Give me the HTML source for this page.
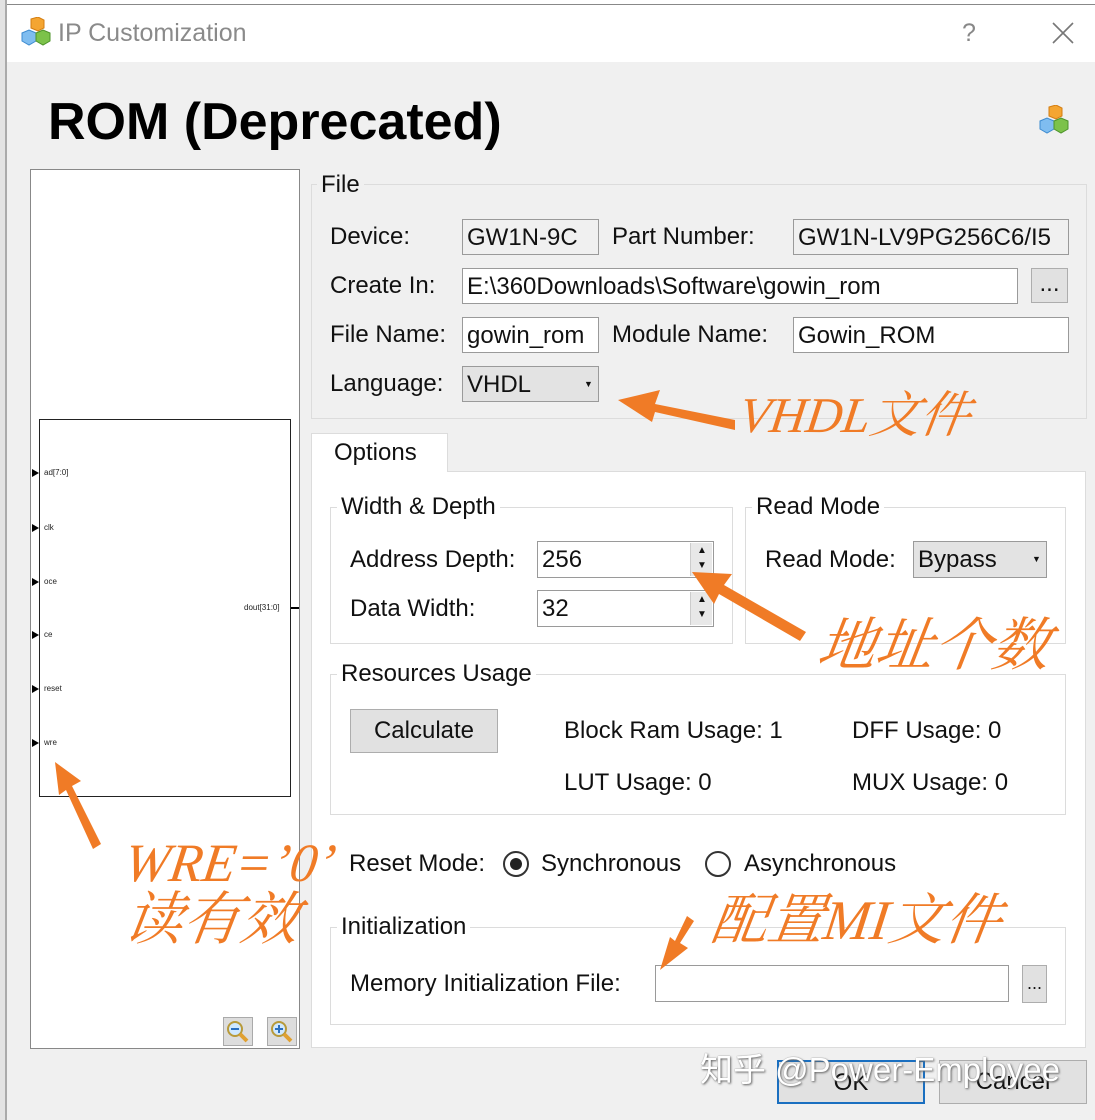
<!DOCTYPE html>
<html><head><meta charset="utf-8"><style>
*{margin:0;padding:0;box-sizing:border-box}
body{width:1095px;height:1120px;position:relative;overflow:hidden;background:#f0f0f0;font-family:"Liberation Sans","Noto Sans CJK SC",sans-serif;color:#111}
.a{position:absolute}
.t{position:absolute;font-size:24px;line-height:28px;white-space:nowrap}
.box{position:absolute;border:1px solid #9a9a9a;background:#fff;font-size:24px;line-height:35px;padding-left:4px;white-space:nowrap;overflow:hidden}
.grp{position:absolute;border:1px solid #dcdcdc}
.gt{position:absolute;font-size:24px;line-height:28px;padding:0 4px;white-space:nowrap}
.btn{position:absolute;border:1px solid #adadad;background:#e1e1e1;font-size:24px;text-align:center;white-space:nowrap}
.pin{position:absolute;left:32px;width:0;height:0;border-top:4px solid transparent;border-bottom:4px solid transparent;border-left:7px solid #000}
.pl{position:absolute;left:44px;font-size:8px;color:#222}
.an{position:absolute;color:#f07b26;font-family:"Liberation Serif","Noto Serif CJK SC",serif;font-style:italic;font-size:54px;line-height:58px;white-space:nowrap;transform:skewX(-8deg)}
.spin{position:absolute;right:1px;width:22px;background:#e8e8e8;border-left:1px solid #ccc}
</style></head><body>
<div class="a" style="left:0;top:0;width:1095px;height:5px;background:#fff;border-bottom:1px solid #888"></div>
<div class="a" style="left:0;top:0;width:7px;height:1120px;background:#e3e3e3;border-right:2px solid #aaa"></div>
<div class="a" style="left:7px;top:5px;width:1088px;height:57px;background:#fff"></div>
<svg class="a" style="left:20px;top:17px" width="32" height="32" viewBox="0 0 32 32">
<path d="M11 2l7-2 6 3v8l-6 3-7-3z" fill="#f4a531" stroke="#d47d10"/>
<path d="M2 16l7-3 7 3v8l-7 4-7-4z" fill="#7fbdf0" stroke="#3d8bd0"/>
<path d="M16 16l7-3 7 3v8l-7 4-7-4z" fill="#7cc24a" stroke="#4c932a"/>
</svg>
<div class="t" style="left:58px;top:19px;font-size:25px;color:#8a8a8a">IP Customization</div>
<div class="t" style="left:962px;top:19px;font-size:25px;color:#888">?</div>
<svg class="a" style="left:1052px;top:22px" width="22" height="22"><path d="M1 1L21 21M21 1L1 21" stroke="#777" stroke-width="1.6"/></svg>
<div class="t" style="left:48px;top:91px;font-size:52px;line-height:62px;font-weight:bold;color:#000">ROM (Deprecated)</div>
<svg class="a" style="left:1038px;top:105px" width="32" height="32" viewBox="0 0 32 32">
<path d="M11 2l7-2 6 3v8l-6 3-7-3z" fill="#f4a531" stroke="#d47d10"/>
<path d="M2 16l7-3 7 3v8l-7 4-7-4z" fill="#7fbdf0" stroke="#3d8bd0"/>
<path d="M16 16l7-3 7 3v8l-7 4-7-4z" fill="#7cc24a" stroke="#4c932a"/>
</svg>
<div class="a" style="left:30px;top:169px;width:270px;height:880px;background:#fff;border:1px solid #888"></div>
<div class="a" style="left:39px;top:419px;width:252px;height:378px;border:1px solid #222"></div>
<div class="pin" style="top:469px"></div><div class="pl" style="top:468px">ad[7:0]</div>
<div class="pin" style="top:524px"></div><div class="pl" style="top:523px">clk</div>
<div class="pin" style="top:578px"></div><div class="pl" style="top:577px">oce</div>
<div class="pin" style="top:631px"></div><div class="pl" style="top:630px">ce</div>
<div class="pin" style="top:685px"></div><div class="pl" style="top:684px">reset</div>
<div class="pin" style="top:739px"></div><div class="pl" style="top:738px">wre</div>
<div class="pl" style="left:244px;top:603px">dout[31:0]</div>
<div class="a" style="left:291px;top:607px;width:8px;height:2px;background:#000"></div>
<div class="a" style="left:223px;top:1017px;width:30px;height:29px;background:#ddd;border:1px solid #aaa"></div>
<div class="a" style="left:267px;top:1017px;width:30px;height:29px;background:#ddd;border:1px solid #aaa"></div>
<svg class="a" style="left:225px;top:1019px" width="26" height="26"><circle cx="10" cy="10" r="7" fill="#cfe8ff" stroke="#b89a3a" stroke-width="2"/><path d="M15 15l7 7" stroke="#e0a030" stroke-width="4"/><path d="M6 10h8" stroke="#2a6fc0" stroke-width="2"/></svg>
<svg class="a" style="left:269px;top:1019px" width="26" height="26"><circle cx="10" cy="10" r="7" fill="#cfe8ff" stroke="#b89a3a" stroke-width="2"/><path d="M15 15l7 7" stroke="#e0a030" stroke-width="4"/><path d="M6 10h8M10 6v8" stroke="#2a6fc0" stroke-width="2"/></svg>
<div class="grp" style="left:311px;top:184px;width:776px;height:235px"></div>
<div class="gt" style="left:317px;top:171px;background:#f0f0f0">File</div>
<div class="t" style="left:330px;top:223px">Device:</div>
<div class="box" style="left:462px;top:219px;width:137px;height:36px;background:#f0f0f0">GW1N-9C</div>
<div class="t" style="left:612px;top:223px">Part Number:</div>
<div class="box" style="left:793px;top:219px;width:276px;height:36px;background:#f0f0f0">GW1N-LV9PG256C6/I5</div>
<div class="t" style="left:330px;top:272px">Create In:</div>
<div class="box" style="left:462px;top:268px;width:556px;height:36px">E:\360Downloads\Software\gowin_rom</div>
<div class="btn" style="left:1031px;top:268px;width:37px;height:35px;line-height:30px">...</div>
<div class="t" style="left:330px;top:321px">File Name:</div>
<div class="box" style="left:462px;top:317px;width:137px;height:36px">gowin_rom</div>
<div class="t" style="left:612px;top:321px">Module Name:</div>
<div class="box" style="left:793px;top:317px;width:276px;height:36px">Gowin_ROM</div>
<div class="t" style="left:330px;top:370px">Language:</div>
<div class="box" style="left:462px;top:366px;width:137px;height:36px;background:#e3e3e3">VHDL<span style="position:absolute;left:121px;top:0px;font-size:9px">▼</span></div>
<div class="a" style="left:311px;top:433px;width:137px;height:40px;background:#fff;border:1px solid #dcdcdc;border-bottom:none"></div>
<div class="t" style="left:334px;top:439px">Options</div>
<div class="a" style="left:311px;top:471px;width:775px;height:577px;background:#fff;border:1px solid #dcdcdc"></div>
<div class="a" style="left:312px;top:471px;width:135px;height:2px;background:#fff"></div>
<div class="grp" style="left:330px;top:507px;width:403px;height:137px"></div>
<div class="gt" style="left:337px;top:493px;background:#fff">Width &amp; Depth</div>
<div class="t" style="left:350px;top:546px">Address Depth:</div>
<div class="box" style="left:537px;top:541px;width:177px;height:37px">256<div class="spin" style="top:1px;height:33px"><span style="position:absolute;left:6px;top:-10px;font-size:10px">▲</span><span style="position:absolute;left:6px;top:5px;font-size:10px">▼</span></div></div>
<div class="t" style="left:350px;top:595px">Data Width:</div>
<div class="box" style="left:537px;top:590px;width:177px;height:37px">32<div class="spin" style="top:1px;height:33px"><span style="position:absolute;left:6px;top:-10px;font-size:10px">▲</span><span style="position:absolute;left:6px;top:5px;font-size:10px">▼</span></div></div>
<div class="grp" style="left:745px;top:507px;width:321px;height:137px"></div>
<div class="gt" style="left:752px;top:493px;background:#fff">Read Mode</div>
<div class="t" style="left:765px;top:546px">Read Mode:</div>
<div class="box" style="left:913px;top:541px;width:134px;height:37px;background:#e3e3e3">Bypass<span style="position:absolute;left:118px;top:0px;font-size:9px">▼</span></div>
<div class="grp" style="left:330px;top:674px;width:736px;height:141px"></div>
<div class="gt" style="left:337px;top:660px;background:#fff">Resources Usage</div>
<div class="btn" style="left:350px;top:709px;width:148px;height:44px;line-height:42px">Calculate</div>
<div class="t" style="left:564px;top:717px">Block Ram Usage: 1</div>
<div class="t" style="left:852px;top:717px">DFF Usage: 0</div>
<div class="t" style="left:564px;top:769px">LUT Usage: 0</div>
<div class="t" style="left:852px;top:769px">MUX Usage: 0</div>
<div class="t" style="left:349px;top:850px">Reset Mode:</div>
<div class="a" style="left:503px;top:851px;width:26px;height:26px;border:2px solid #333;border-radius:50%;background:#fff"></div>
<div class="a" style="left:510px;top:858px;width:12px;height:12px;border-radius:50%;background:#222"></div>
<div class="t" style="left:541px;top:850px">Synchronous</div>
<div class="a" style="left:705px;top:851px;width:26px;height:26px;border:2px solid #333;border-radius:50%;background:#fff"></div>
<div class="t" style="left:744px;top:850px">Asynchronous</div>
<div class="grp" style="left:330px;top:927px;width:736px;height:98px"></div>
<div class="gt" style="left:337px;top:913px;background:#fff">Initialization</div>
<div class="t" style="left:350px;top:970px">Memory Initialization File:</div>
<div class="box" style="left:655px;top:965px;width:354px;height:37px"></div>
<div class="btn" style="left:1022px;top:965px;width:25px;height:38px;line-height:34px;font-size:18px">...</div>
<div class="btn" style="left:777px;top:1060px;width:148px;height:44px;line-height:42px;border:2px solid #1a6fc0">OK</div>
<div class="btn" style="left:939px;top:1060px;width:148px;height:44px;line-height:42px">Cancel</div>
<div class="t" style="left:700px;top:1051px;font-size:33px;line-height:38px;color:#fff;text-shadow:1px 1px 2px #666,0 0 1px #888">知乎 @Power-Employee</div>
<svg class="a" style="left:0;top:0" width="1095" height="1120">
<g fill="#f07b26">
<polygon points="735,420 655,404 660,390 618,400 652,422 655,412 735,430"/>
<polygon points="806,632 724,585 732,574 692,572 714,604 719,594 800,641"/>
<polygon points="101,844 72,786 81,781 55,762 59,795 66,790 93,849"/>
<polygon points="694,921 680,943 688,948 660,970 670,937 675,941 687,916"/>
</g>
</svg>
<div class="an" style="left:740px;top:386px;font-size:50px">VHDL文件</div>
<div class="an" style="left:818px;top:617px;font-size:58px">地址个数</div>
<div class="an" style="left:125px;top:834px">WRE=’0’</div>
<div class="an" style="left:125px;top:891px;font-size:58px">读有效</div>
<div class="an" style="left:712px;top:892px;font-size:56px">配置MI文件</div>
</body></html>
